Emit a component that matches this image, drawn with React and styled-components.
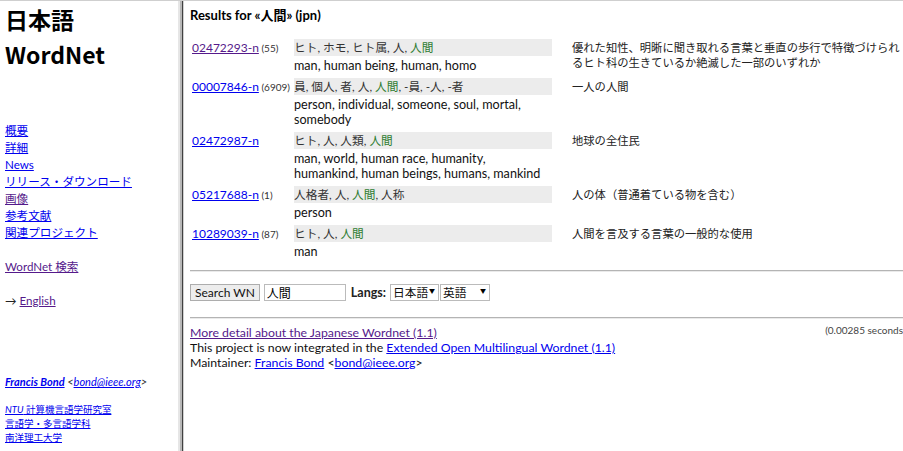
import React from "react";
import styled, { createGlobalStyle } from "styled-components";

const GlobalStyle = createGlobalStyle`
  html, body {
    margin: 0;
    padding: 0;
    height: 451px;
    overflow: hidden;
    background: #fff;
  }
  body {
    font-family: Lato, "Noto Sans CJK JP", sans-serif;
    color: #111;
  }
  a { color: #0000ee; }
  a.visited { color: #551a8b; }
`;

const jp = `Lato, "Noto Sans CJK JP", sans-serif`;

const results = [
  {
    id: "02472293-n",
    count: "(55)",
    visited: true,
    lemmas: ["ヒト", "ホモ", "ヒト属", "人"],
    english: "man, human being, human, homo",
    def: "優れた知性、明晰に聞き取れる言葉と垂直の歩行で特徴づけられるヒト科の生きているか絶滅した一部のいずれか",
  },
  {
    id: "00007846-n",
    count: "(6909)",
    lemmas: ["員", "個人", "者", "人"],
    after: ["-員", "-人", "-者"],
    english: "person, individual, someone, soul, mortal, somebody",
    def: "一人の人間",
  },
  {
    id: "02472987-n",
    lemmas: ["ヒト", "人", "人類"],
    english: "man, world, human race, humanity, humankind, human beings, humans, mankind",
    def: "地球の全住民",
  },
  {
    id: "05217688-n",
    count: "(1)",
    lemmas: ["人格者", "人"],
    after: ["人称"],
    english: "person",
    def: "人の体（普通着ている物を含む）",
  },
  {
    id: "10289039-n",
    count: "(87)",
    lemmas: ["ヒト", "人"],
    english: "man",
    def: "人間を言及する言葉の一般的な使用",
  },
];

const App = () => {
  return (
    <>
      <GlobalStyle />
      <TopLine />
      <Frames>
        <Sidebar>
          <SiteTitle>日本語<br />WordNet</SiteTitle>
          <NavList>
            <a href="#">概要</a>
            <a href="#">詳細</a>
            <a href="#">News</a>
            <a href="#">リリース・ダウンロード</a>
            <a href="#" className="visited">画像</a>
            <a href="#">参考文献</a>
            <a href="#">関連プロジェクト</a>
            <Spacer />
            <a href="#" className="visited">WordNet 検索</a>
            <Spacer />
            <span>→ <a href="#" className="visited">English</a></span>
          </NavList>
          <Footer>
            <Author>
              <a href="#"><b>Francis Bond</b></a> &lt;<a href="#">bond@ieee.org</a>&gt;
            </Author>
            <Lab>
              <a href="#"><i>NTU</i> 計算機言語学研究室</a>
              <a href="#">言語学・多言語学科</a>
              <a href="#">南洋理工大学</a>
            </Lab>
          </Footer>
        </Sidebar>
        <Divider />
        <Main>
          <ResultsTitle>Results for «人間» (jpn)</ResultsTitle>
          <ResultTable>
            {results.map((r) => (
              <React.Fragment key={r.id}>
                <IdCell>
                  <a href="#" className={r.visited ? "visited" : ""}>{r.id}</a>
                  {r.count && <Count> {r.count}</Count>}
                </IdCell>
                <WordCell>
                  <Lemmas>
                    {r.lemmas.join(", ")}, <Hit>人間</Hit>
                    {r.after && ", " + r.after.join(", ")}
                  </Lemmas>
                  <English>{r.english}</English>
                </WordCell>
                <DefCell>{r.def}</DefCell>
              </React.Fragment>
            ))}
          </ResultTable>
          <Rule $top="11px" />
          <SearchForm>
            <Button>Search WN</Button>
            <TextInput defaultValue="人間" />
            <Label>Langs:</Label>
            <SelectWrap>
              <Select defaultValue="jpn" $w="49px">
                <option value="jpn">日本語</option>
              </Select>
              <Arrow>▼</Arrow>
            </SelectWrap>
            <SelectWrap>
              <Select defaultValue="eng" $w="50px">
                <option value="eng">英語</option>
              </Select>
              <Arrow>▼</Arrow>
            </SelectWrap>
          </SearchForm>
          <Rule $top="0" />
          <Info>
            <Timing>(0.00285 seconds</Timing>
            <a href="#" className="visited">More detail about the Japanese Wordnet (1.1)</a>
            <div>
              This project is now integrated in the{" "}
              <a href="#">Extended Open Multilingual Wordnet (1.1)</a>
            </div>
            <div>
              Maintainer: <a href="#">Francis Bond</a> &lt;<a href="#">bond@ieee.org</a>&gt;
            </div>
          </Info>
        </Main>
      </Frames>
    </>
  );
};

const TopLine = styled.div`
  height: 1px;
  background: #cfcfcf;
`;

const Frames = styled.div`
  display: flex;
  height: 450px;
`;

const Sidebar = styled.div`
  width: 178px;
  flex-shrink: 0;
  padding: 1px 0 0 5px;
  box-sizing: border-box;
  display: flex;
  flex-direction: column;
  font-family: ${jp};
`;

const SiteTitle = styled.div`
  font-size: 23px;
  font-weight: 700;
  line-height: 35px;
  color: #000;
  font-family: "Noto Sans CJK JP", Lato, sans-serif;
`;

const NavList = styled.div`
  margin-top: 50px;
  display: flex;
  flex-direction: column;
  align-items: flex-start;
  font-size: 11.6px;
  line-height: 17px;
  color: #222;
`;

const Spacer = styled.div`
  height: 17px;
`;

const Footer = styled.div`
  margin-top: auto;
  padding-bottom: 6px;
  font-size: 9.5px;
  line-height: 14px;
  color: #333;
`;

const Author = styled.div`
  margin-bottom: 14px;
  font-style: italic;
  font-size: 11px;
`;

const Lab = styled.div`
  display: flex;
  flex-direction: column;
  align-items: flex-start;
`;

const Divider = styled.div`
  width: 6px;
  flex-shrink: 0;
  background: linear-gradient(
    to right,
    #e6e6e6 0 2px,
    #b8b8b8 2px 4px,
    #404040 4px 5px,
    #d0d0d0 5px 6px
  );
`;

const Main = styled.div`
  flex: 1;
  min-width: 0;
  padding: 6px 0 0 6px;
  font-family: ${jp};
  font-size: 12.6px;
  line-height: 15px;
`;

const ResultsTitle = styled.div`
  font-weight: 700;
  font-size: 13px;
  line-height: 16px;
  color: #000;
  margin-bottom: 16px;
`;

const ResultTable = styled.div`
  display: grid;
  grid-template-columns: 102px 258px 1fr;
  row-gap: 5px;
  padding-left: 2px;
  padding-right: 3px;
`;

const IdCell = styled.div`
  font-size: 12px;
  line-height: 17px;
  white-space: nowrap;
`;

const Count = styled.span`
  font-size: 10px;
  color: #333;
`;

const WordCell = styled.div`
  display: flex;
  flex-direction: column;
`;

const Lemmas = styled.div`
  background: #ececec;
  line-height: 17px;
  font-size: 11.7px;
  color: #333;
`;

const Hit = styled.span`
  color: #2e7d32;
`;

const English = styled.div`
  color: #111;
  padding-top: 2px;
`;

const DefCell = styled.div`
  padding-left: 20px;
  color: #222;
  font-size: 11.3px;
  line-height: 15px;
  padding-top: 1px;
`;

const Rule = styled.hr`
  border: none;
  border-top: 1px solid #b4b4b4;
  border-bottom: 1px solid #eaeaea;
  margin: ${(p) => p.$top} 0 0 0;
`;

const SearchForm = styled.div`
  display: flex;
  align-items: center;
  gap: 4px;
  margin: 12px 0 16px 0;
`;

const Button = styled.button`
  font-family: ${jp};
  font-size: 12px;
  height: 17px;
  padding: 0 4px;
  background: #ededed;
  border: 1px solid #adadad;
  color: #111;
  line-height: 14px;
`;

const TextInput = styled.input`
  font-family: ${jp};
  font-size: 12px;
  width: 76px;
  height: 15px;
  padding: 0 2px;
  border: 1px solid #bbb;
  margin-right: 1px;
`;

const Label = styled.span`
  font-weight: 700;
  font-size: 12.5px;
  color: #222;
`;

const SelectWrap = styled.span`
  position: relative;
  display: inline-block;
  margin-right: -3px;
`;

const Select = styled.select`
  appearance: none;
  display: block;
  font-family: ${jp};
  font-size: 11.7px;
  width: ${(p) => p.$w};
  height: 17px;
  padding: 0 0 0 2px;
  border: 1px solid #bbb;
  border-radius: 0;
  background: #fff;
  color: #111;
  line-height: 15px;
`;

const Arrow = styled.span`
  position: absolute;
  right: 4px;
  top: 3px;
  font-size: 6px;
  line-height: 8px;
  color: #000;
  pointer-events: none;
`;

const Info = styled.div`
  position: relative;
  margin-top: 6px;
  font-size: 12.3px;
  line-height: 15px;
  color: #111;
`;

const Timing = styled.span`
  position: absolute;
  right: 0;
  top: 0;
  font-size: 10px;
  color: #444;
  line-height: 11px;
`;

export default App;
